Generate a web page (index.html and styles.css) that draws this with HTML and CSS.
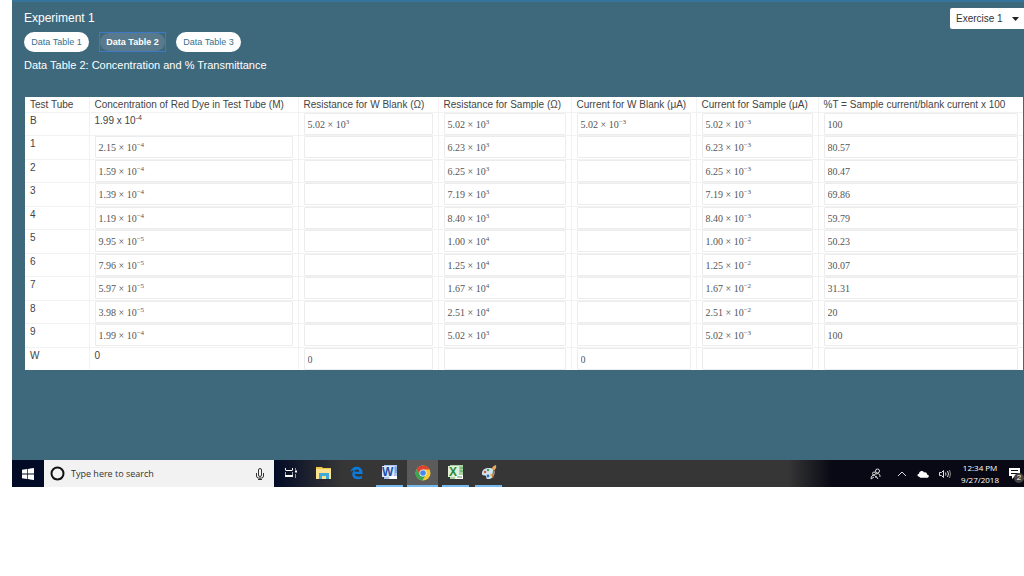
FILE: index.html
```
<!DOCTYPE html>
<html lang="en">
<head>
    <meta charset="UTF-8">
    <meta name="viewport" content="width=device-width, initial-scale=1.0">
    <title>Experiment 1</title>
    <link rel="stylesheet" href="styles.css">
</head>
<body>

<div class="desktop">
    <main class="lab">
        <div class="lab-header">
            <h1>Experiment 1</h1>
            <select class="exercise" aria-label="Exercise">
                <option>Exercise 1</option>
            </select>
        </div>

        <nav class="tabs">
            <button class="tab">Data Table 1</button>
            <button class="tab active"><span>Data Table 2</span></button>
            <button class="tab">Data Table 3</button>
        </nav>

        <h2>Data Table 2: Concentration and % Transmittance</h2>

        <table class="data">
            <colgroup>
                <col class="c-tube">
                <col class="c-conc">
                <col class="c-res-blank">
                <col class="c-res-sample">
                <col class="c-cur-blank">
                <col class="c-cur-sample">
                <col>
            </colgroup>
            <thead>
                <tr>
                    <th>Test Tube</th>
                    <th>Concentration of Red Dye in Test Tube (M)</th>
                    <th>Resistance for W Blank (Ω)</th>
                    <th>Resistance for Sample (Ω)</th>
                    <th>Current for W Blank (μA)</th>
                    <th>Current for Sample (μA)</th>
                    <th>%T = Sample current/blank current x 100</th>
                </tr>
            </thead>
            <tbody id="rows"></tbody>
        </table>
    </main>

    <!-- Taskbar -->
    <footer class="taskbar">
        <button class="start" aria-label="Start">
            <svg width="12" height="12" viewBox="0 0 12 12" fill="#fff"><path d="M0 1.700 5 1V5.600H0zM5.700.9 12 0v5.600H5.700zM0 6.400h5V11L0 10.300zM5.700 6.400H12V12l-6.300-.9z"/></svg>
        </button>
        <div class="search">
            <svg width="15" height="15" viewBox="0 0 15 15"><circle cx="7.500" cy="7.500" r="6" fill="none" stroke="#111" stroke-width="2"/></svg>
            <input type="text" placeholder="Type here to search" aria-label="Search">
            <svg width="8" height="12" viewBox="0 0 8 12" fill="none" stroke="#333"><rect x="2.500" y=".5" width="3" height="8" rx="1.500"/><path d="M.5 5v3q0 2 2 2h3q2 0 2-2V5M4 10v2M2 11.500h4"/></svg>
        </div>
        <div class="apps">
            <button aria-label="Task View">
                <svg width="12" height="12" viewBox="0 0 12 12" fill="none" stroke="#fff"><path d="M.5 1v2M7.500 1v2M.5 3.500h7"/><path d="M.5 5v5M7.500 5v5" stroke="#aaa"/><path d="M0 9h8" stroke-width="2"/><path d="M10.500 1v2M10.500 7v4" stroke="#999"/><path d="M10 4.500h2" stroke-width="2"/></svg>
            </button>
            <button aria-label="File Explorer">
                <svg width="16" height="14" viewBox="0 0 16 14"><path d="M0 1h6l1 1h8v11H0z" fill="#f2c84c"/><path d="M0 3h15v10H0z" fill="#fce28e"/><path d="M3 7h10v6h-3v-3H6v3H3z" fill="#3fa9d8"/></svg>
            </button>
            <button aria-label="Edge">
                <svg width="13" height="14" viewBox="0 0 14 14"><path d="M.5 6.200C1.200 2.300 3.800.3 7.200.3c4 0 6.300 2.700 6.300 6.200v1.600H5c.2 2 1.900 2.900 4 2.900 1.500 0 2.800-.4 3.900-1.100v2.800c-1.300.7-2.900 1-4.500 1-3.700 0-6-2.100-6-5.300 0-2.100 1.100-3.700 3-4.600C3 4 1.300 5 .5 6.200zM5 5.700h4.900c0-1.500-.8-2.400-2.300-2.400S5.200 4.200 5 5.700z" fill="#0a7bdc"/></svg>
            </button>
            <button class="open" aria-label="Word">
                <svg width="16" height="15" viewBox="0 0 16 15"><path d="M2 0h13v14H2z" fill="#a9c4ee"/><path d="M0 1h12v11H0z" fill="#dbe7fa"/><path d="M8 11h7v3H7z" fill="#fff"/><path d="M13 3h2M13 5h2M13 7h2" stroke="#5c86cc"/><text x="0" y="11" class="logo word">W</text></svg>
            </button>
            <button class="open current" aria-label="Chrome">
                <svg width="16" height="16" viewBox="0 0 16 16"><circle cx="8" cy="8" r="7.500" fill="#f8c832"/><path d="M1.500 4.300A7.500 7.500 0 0 1 14.600 4.500H8L5 10z" fill="#df4132"/><path d="M1.500 4.300A7.500 7.500 0 0 0 7.300 15.500L10.800 10 8 11.500 5 10z" fill="#3ba354"/><circle cx="8" cy="8" r="3.600" fill="#f4f4f4"/><circle cx="8" cy="8" r="2.800" fill="#4687ed"/></svg>
            </button>
            <button class="open" aria-label="Excel">
                <svg width="16" height="15" viewBox="0 0 16 15"><path d="M2 0h13v14H2z" fill="#a8d3a2"/><path d="M0 1h11v11H0z" fill="#dff0dc"/><path d="M8 10h7v4H7z" fill="#fff"/><path d="M12 3h3M12 6h3M9 12h5" stroke="#4f9b4e"/><text x="1" y="11" class="logo excel">X</text></svg>
            </button>
            <button class="open" aria-label="Paint">
                <svg width="16" height="15" viewBox="0 0 16 15"><path d="M1 8c0-3.500 4-5.500 8-5 4 .4 5 3 4.500 5.500-.8 4-4 6-7 5.500-2-.3-.5-2.500-2-3.200C2.500 10 .5 10.500 1 8z" fill="#cfe4f1"/><circle cx="4" cy="7" r="1.300" fill="#d75c43"/><circle cx="7" cy="5" r="1.200" fill="#4c9b4c"/><circle cx="7" cy="11" r="1.400" fill="#2d72b8"/><circle cx="10.500" cy="10" r="1.300" fill="#e7b83f"/><path d="m11.500 13 1.500-9" stroke="#b56f35" stroke-width="1.500"/><path d="M11 4c0-2 1-3 4-4 .5 2 0 4-1.500 5z" fill="#e8a75b"/></svg>
            </button>
        </div>
        <div class="tray">
            <svg class="people" width="11" height="12" viewBox="0 0 11 12" fill="none" stroke="#ddd"><circle cx="7.500" cy="3" r="2"/><circle cx="4" cy="5.500" r="1.500"/><path d="M1 11c0-5 5-5 5-1M6 6c3-1 4 0 4 3M1 11l3-2M6 8l2 3"/></svg>
            <svg width="10" height="6" viewBox="0 0 10 6" fill="none" stroke="#ddd"><path d="m1 5 4-4 4 4"/></svg>
            <svg width="12" height="8" viewBox="0 0 12 8" fill="#fff"><path d="M2 6.500C0 6.500 0 4 2 3.800 2.200 1 5.500 0 7 2.500c2-.5 3 .5 3 2 2.500.2 2.300 3.300 0 3.300H4C3 7.800 2.500 7 2 6.500z"/></svg>
            <svg width="12" height="10" viewBox="0 0 12 10" fill="none" stroke="#ddd"><path d="M.5 3.500h2l2-2v7l-2-2h-2zM6.500 3.500q1 1.500 0 3M8.500 2q2 3 0 6"/><path d="M10.500 1q2 4 0 8" stroke="#888"/></svg>
            <div class="clock">12:34 PM<br>9/27/2018</div>
            <button class="notes" aria-label="Notifications">
                <svg width="11" height="11" viewBox="0 0 11 11"><path d="M0 0h11v8H6l-3 3V8H0z" fill="#fff"/><path d="M2 2.500h7M2 5.500h7" stroke="#111"/></svg>
                <span class="badge">2</span>
            </button>
        </div>
    </footer>
</div>

<script>
    // "a^b" is a power of ten, "" an empty box, "=" in front is fixed text
    const data = [
        ["B", "=1.99 x 10^-4", "5.02 × 10^3", "5.02 × 10^3", "5.02 × 10^−3", "5.02 × 10^−3", "100"],
        ["1", "2.15 × 10^−4", "", "6.23 × 10^3", "", "6.23 × 10^−3", "80.57"],
        ["2", "1.59 × 10^−4", "", "6.25 × 10^3", "", "6.25 × 10^−3", "80.47"],
        ["3", "1.39 × 10^−4", "", "7.19 × 10^3", "", "7.19 × 10^−3", "69.86"],
        ["4", "1.19 × 10^−4", "", "8.40 × 10^3", "", "8.40 × 10^−3", "59.79"],
        ["5", "9.95 × 10^−5", "", "1.00 × 10^4", "", "1.00 × 10^−2", "50.23"],
        ["6", "7.96 × 10^−5", "", "1.25 × 10^4", "", "1.25 × 10^−2", "30.07"],
        ["7", "5.97 × 10^−5", "", "1.67 × 10^4", "", "1.67 × 10^−2", "31.31"],
        ["8", "3.98 × 10^−5", "", "2.51 × 10^4", "", "2.51 × 10^−2", "20"],
        ["9", "1.99 × 10^−4", "", "5.02 × 10^3", "", "5.02 × 10^−3", "100"],
        ["W", "=0", "0", "", "0", "", ""]
    ];
    const headers = [...document.querySelectorAll(".data th")].map(th => th.textContent);

    function power(text) {
        return text.replace(/\^(.+)$/, "<sup>$1</sup>");
    }

    function cell(value, col, tube) {
        if (col === 0) return `<td>${value}</td>`;
        if (value.startsWith("=")) return `<td>${power(value.slice(1))}</td>`;
        const label = `${headers[col]}, tube ${tube}`;
        if (value.includes("^")) {
            return `<td><div class="box" role="textbox" contenteditable="true" spellcheck="false" aria-label="${label}">${power(value)}</div></td>`;
        }
        return `<td><input class="box" type="text" value="${value}" aria-label="${label}"></td>`;
    }

    document.getElementById("rows").innerHTML = data
        .map(row => `<tr>${row.map((value, col) => cell(value, col, row[0])).join("")}</tr>`)
        .join("");
</script>

</body>
</html>
```
FILE: styles.css
```
* {
    box-sizing: border-box;
}
body {
    margin: 0;
    background: #fff;
    font-family: "Liberation Sans", Arial, sans-serif;
}
button, input, select {
    font-family: inherit;
    margin: 0;
}
.desktop {
    margin-left: 12px;
}
.lab {
    background: #3e697d;
    border-top: 2px solid #35749b;
    padding: 6px 0 90px 12px;
    color: #fff;
}
.lab-header {
    display: flex;
    justify-content: space-between;
    align-items: center;
}
h1 {
    margin: 0;
    padding-bottom: 2px;
    font-size: 12px;
    font-weight: normal;
}
.exercise {
    appearance: none;
    width: 74px;
    height: 21px;
    padding: 0 6px;
    border: 0;
    border-radius: 2px 0 0 2px;
    background: #fff url("data:image/svg+xml,%3Csvg xmlns='http://www.w3.org/2000/svg' width='7' height='4'%3E%3Cpath d='M0 0h7L3.500 4z' fill='%23222'/%3E%3C/svg%3E") no-repeat right 5px center;
    color: #333;
    font-size: 10px;
}
.tabs {
    display: flex;
    gap: 10px;
    margin-top: 3px;
}
.tab {
    width: 65px;
    height: 20px;
    padding: 0;
    border: 0;
    border-radius: 10px;
    background: #fff;
    color: #37718f;
    font-size: 9px;
    white-space: nowrap;
}
.tab.active {
    width: 67px;
    border: 1px solid #3f78c4;
    border-radius: 0;
    background: none;
    color: #fff;
    font-weight: bold;
}
.tab.active span {
    display: block;
    line-height: 18px;
    border-radius: 9px;
    background: #587a8c;
}
h2 {
    margin: 6px 0 25px;
    font-size: 11px;
    line-height: 14px;
    font-weight: normal;
}
.data {
    width: calc(100% - 2px);
    margin-left: 1px;
    table-layout: fixed;
    border-collapse: collapse;
    background: #fff;
    color: #444;
    font-size: 10px;
    line-height: 15px;
}
.c-tube { width: 64px; }
.c-conc { width: 209px; }
.c-res-blank { width: 140px; }
.c-res-sample { width: 133px; }
.c-cur-blank { width: 125px; }
.c-cur-sample { width: 122px; }
.data th, .data td {
    padding: 0 5px;
    border-right: 1px solid #f2f2f2;
    border-bottom: 1px solid #f2f2f2;
    font-weight: normal;
    text-align: left;
    vertical-align: top;
    white-space: nowrap;
}
.data td {
    height: 23px;
}
.data tr:nth-child(even) td {
    height: 24px;
}
.data tr > :last-child {
    border-right: 0;
}
.data tbody tr:last-child td {
    height: 22px;
    border-bottom: 0;
}
sup {
    font-size: 7px;
    line-height: 0;
}
.box {
    display: block;
    width: 100%;
    height: 22px;
    padding: 0 3px;
    border: 1px solid #ececec;
    border-radius: 1px;
    background: #fff;
    color: #555;
    font-family: "Liberation Serif", "Times New Roman", serif;
    font-size: 10px;
    line-height: 21px;
}
.taskbar {
    display: flex;
    height: 27px;
    background: linear-gradient(90deg, #020b26 0, #020b26 262px, #363636 330px, #363636 776px, #080914 820px, #080914 100%);
}
.taskbar button {
    display: flex;
    justify-content: center;
    align-items: center;
    padding: 0;
    border: 0;
    background: none;
}
.taskbar .start {
    width: 32px;
}
.search {
    display: flex;
    align-items: center;
    gap: 6px;
    width: 230px;
    padding: 0 10px 0 6px;
    background: #f2f2f2;
}
.search input {
    flex: 1;
    min-width: 0;
    padding: 0;
    border: 0;
    background: none;
    font-family: "Open Sans", sans-serif;
    font-size: 9px;
}
.search input::placeholder {
    color: #333;
}
.apps {
    display: flex;
}
.apps button {
    width: 33px;
    border-bottom: 2px solid transparent;
}
.taskbar .open {
    width: 27px;
    margin: 0 3px;
    border-bottom: 2px solid #76b9ed;
}
.taskbar .current {
    width: 31px;
    margin: 0 1px;
    background: #5b5b5b;
}
.logo {
    font-size: 12px;
    font-weight: bold;
}
.word {
    fill: #1f50a6;
}
.excel {
    fill: #2b8a35;
}
.tray {
    display: flex;
    align-items: center;
    gap: 10px;
    margin-left: auto;
}
.people {
    margin-right: 6px;
}
.clock {
    color: #fff;
    font-family: "Open Sans", sans-serif;
    font-size: 8px;
    line-height: 12px;
    text-align: center;
}
.tray .notes {
    position: relative;
    width: 15px;
    height: 27px;
    justify-content: flex-start;
}
.badge {
    position: absolute;
    right: 0;
    bottom: 4px;
    width: 10px;
    height: 10px;
    border-radius: 50%;
    background: #444;
    color: #fff;
    font-size: 8px;
    line-height: 10px;
    text-align: center;
}
```
